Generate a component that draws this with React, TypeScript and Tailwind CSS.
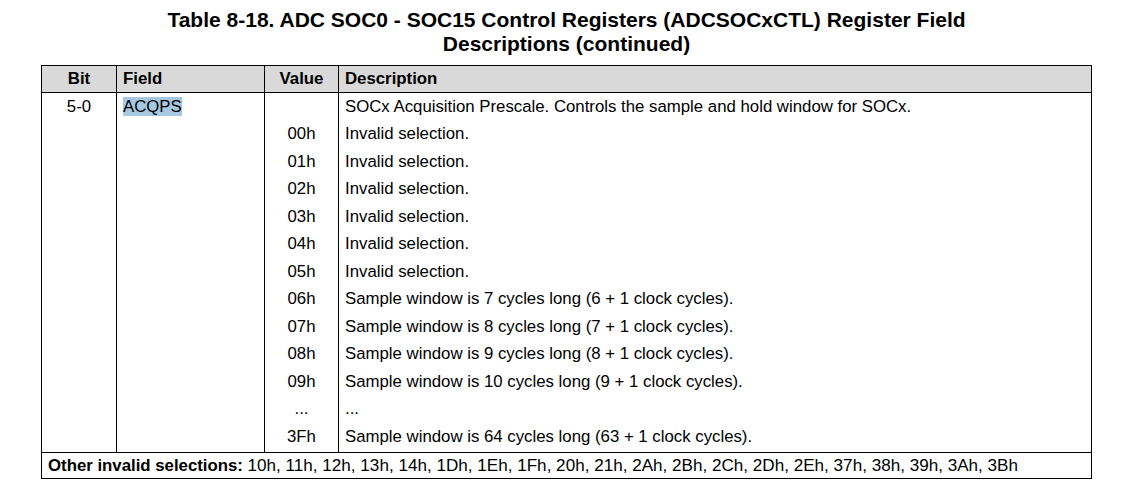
export default function App() {
  const rows: [string, string][] = [
    ["00h", "Invalid selection."],
    ["01h", "Invalid selection."],
    ["02h", "Invalid selection."],
    ["03h", "Invalid selection."],
    ["04h", "Invalid selection."],
    ["05h", "Invalid selection."],
    ["06h", "Sample window is 7 cycles long (6 + 1 clock cycles)."],
    ["07h", "Sample window is 8 cycles long (7 + 1 clock cycles)."],
    ["08h", "Sample window is 9 cycles long (8 + 1 clock cycles)."],
    ["09h", "Sample window is 10 cycles long (9 + 1 clock cycles)."],
    ["...", "..."],
    ["3Fh", "Sample window is 64 cycles long (63 + 1 clock cycles)."],
  ];

  return (
    <main
      className="h-[487px] w-[1128px] bg-white text-black"
      style={{ fontFamily: '"Liberation Sans", Arial, sans-serif' }}
    >
      <div className="ml-[41px] w-[1051px] pt-[8px]">
        {/* Title */}
        <h1 className="text-center text-[21px] leading-[24px] font-bold">
          Table 8-18. ADC SOC0 - SOC15 Control Registers (ADCSOCxCTL) Register Field
          <br />
          Descriptions (continued)
        </h1>

        {/* Register table */}
        <table className="mt-[9px] w-[1051px] table-fixed border-collapse text-[16.8px] leading-[20px]">
          <colgroup>
            <col className="w-[75px]" />
            <col className="w-[148px]" />
            <col className="w-[74px]" />
            <col />
          </colgroup>
          <thead>
            <tr className="h-[27px] bg-[#d9d9d9] font-bold">
              <th className="border-[1.5px] border-black text-center">Bit</th>
              <th className="border-[1.5px] border-black px-[6px] text-left">Field</th>
              <th className="border-[1.5px] border-black text-center">Value</th>
              <th className="border-[1.5px] border-black px-[6px] text-left">Description</th>
            </tr>
          </thead>
          <tbody>
            <tr className="h-[27.5px]">
              <td rowSpan={13} className="border-[1.5px] border-black text-center align-top pt-[4px]">
                5-0
              </td>
              <td rowSpan={13} className="border-[1.5px] border-black px-[6px] align-top pt-[4px]">
                <span className="bg-[#a6c8e0]">ACQPS</span>
              </td>
              <td className="border-x-[1.5px] border-black"></td>
              <td className="border-x-[1.5px] border-black px-[6px] align-top pt-[4px]">
                SOCx Acquisition Prescale. Controls the sample and hold window for SOCx.
              </td>
            </tr>
            {rows.map(([value, desc], i) => (
              <tr key={value} className={i === rows.length - 1 ? "h-[30px]" : "h-[27.5px]"}>
                <td className="border-x-[1.5px] border-black text-center align-top pt-[4px]">
                  {value}
                </td>
                <td className="border-x-[1.5px] border-black px-[6px] align-top pt-[4px]">
                  {desc}
                </td>
              </tr>
            ))}
            <tr className="h-[26px]">
              <td colSpan={4} className="border-[1.5px] border-black px-[6px]">
                <span className="font-bold">Other invalid selections:</span>{" "}
                <span className="text-[17.1px]">
                  10h, 11h, 12h, 13h, 14h, 1Dh, 1Eh, 1Fh, 20h, 21h, 2Ah, 2Bh, 2Ch, 2Dh, 2Eh, 37h,
                  38h, 39h, 3Ah, 3Bh
                </span>
              </td>
            </tr>
          </tbody>
        </table>
      </div>
    </main>
  );
}
